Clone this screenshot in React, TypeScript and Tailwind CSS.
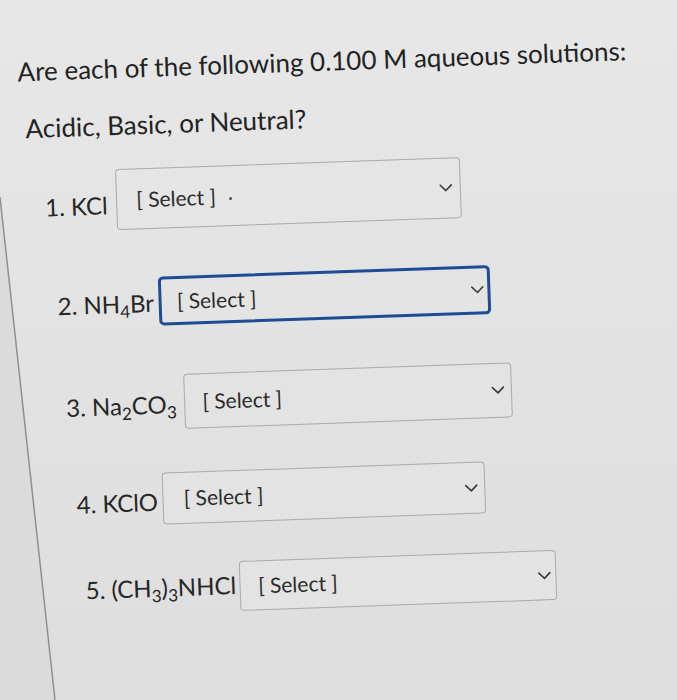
import React from "react";

const Chevron = () => (
  <svg width="14" height="9" viewBox="0 0 14 9" fill="none">
    <polyline points="1.5,1.5 7,7 12.5,1.5" stroke="#3a3b3a" strokeWidth="1.6" strokeLinecap="round" strokeLinejoin="round" />
  </svg>
);

type RowProps = {
  label: React.ReactNode;
  rowClass: string;
  labelClass: string;
  boxClass: string;
  extra?: React.ReactNode;
};

const Row = ({ label, rowClass, labelClass, boxClass, extra }: RowProps) => (
  <div className={`flex items-center ${rowClass}`}>
    <span className={`shrink-0 text-[24px] leading-[28px] text-[#262726] ${labelClass}`}>{label}</span>
    <div className={`flex shrink-0 items-center justify-between ${boxClass}`}>
      <span className="flex items-center text-[21px] leading-[26px] text-[#2a2b2a]">
        [ Select ]{extra}
      </span>
      <Chevron />
    </div>
  </div>
);

const Sub = ({ children }: { children: React.ReactNode }) => (
  <span className="align-[-0.3em] text-[17px] leading-none">{children}</span>
);

export default function App() {
  return (
    <div
      className="relative h-[700px] w-[677px] overflow-hidden bg-[linear-gradient(180deg,#e6e7e6_0%,#e1e2e1_55%,#dddedd_100%)]"
      style={{ fontFamily: "Lato, 'Open Sans', sans-serif" }}
    >
      <svg className="pointer-events-none absolute inset-0" width="677" height="700">
        <polygon points="0,197 55,700 0,700" fill="#dadbda" />
        <line x1="0" y1="197" x2="55" y2="700" stroke="#8f908f" strokeWidth="1.5" />
      </svg>
      <div className="relative origin-top-left -rotate-2 pt-[56px]">
        <p className="pl-[15px] text-[26px] leading-[32px] text-[#222322]">
          Are each of the following 0.100 M aqueous solutions:
        </p>
        <p className="mt-[25px] pl-[21px] text-[26px] leading-[32px] text-[#222322]">
          Acidic, Basic, or Neutral?
        </p>

        <Row
          rowClass="mt-[28px] pl-[38px]"
          labelClass="mt-[10px] mr-[9px]"
          boxClass="h-[61px] w-[345px] rounded-[4px] border border-[#a9aaa9] bg-[#e4e5e4] pl-[19px] pr-[7px]"
          label={<>1. KCl</>}
          extra={<span className="ml-[13px] mt-[6px] inline-block h-[3px] w-[3px] rounded-full bg-[#555]" />}
        />
        <Row
          rowClass="mt-[48px] pl-[47px]"
          labelClass="mt-[6px] mr-[5px]"
          boxClass="h-[49px] w-[332px] rounded-[5px] border-[3px] border-[#1e4d95] bg-[#e3e4e3] pl-[15px] pr-[3px]"
          label={
            <>
              2. NH<Sub>4</Sub>Br
            </>
          }
        />
        <Row
          rowClass="mt-[49px] pl-[52px]"
          labelClass="mt-[8px] mr-[8px]"
          boxClass="h-[55px] w-[328px] rounded-[4px] border border-[#a9aaa9] bg-[#e2e3e2] pl-[17px] pr-[6px]"
          label={
            <>
              3. Na<Sub>2</Sub>CO<Sub>3</Sub>
            </>
          }
        />
        <Row
          rowClass="mt-[43px] pl-[59px]"
          labelClass="mt-[5px] mr-[5px]"
          boxClass="h-[52px] w-[323px] rounded-[4px] border border-[#a9aaa9] bg-[#e2e3e2] pl-[20px] pr-[6px]"
          label={<>4. KClO</>}
        />
        <Row
          rowClass="mt-[39px] pl-[65px]"
          labelClass="mr-[3px]"
          boxClass="h-[50px] w-[317px] rounded-[4px] border border-[#a9aaa9] bg-[#e2e3e2] pl-[18px] pr-[4px]"
          label={
            <>
              5. (CH<Sub>3</Sub>)<Sub>3</Sub>NHCl
            </>
          }
        />
      </div>
    </div>
  );
}
